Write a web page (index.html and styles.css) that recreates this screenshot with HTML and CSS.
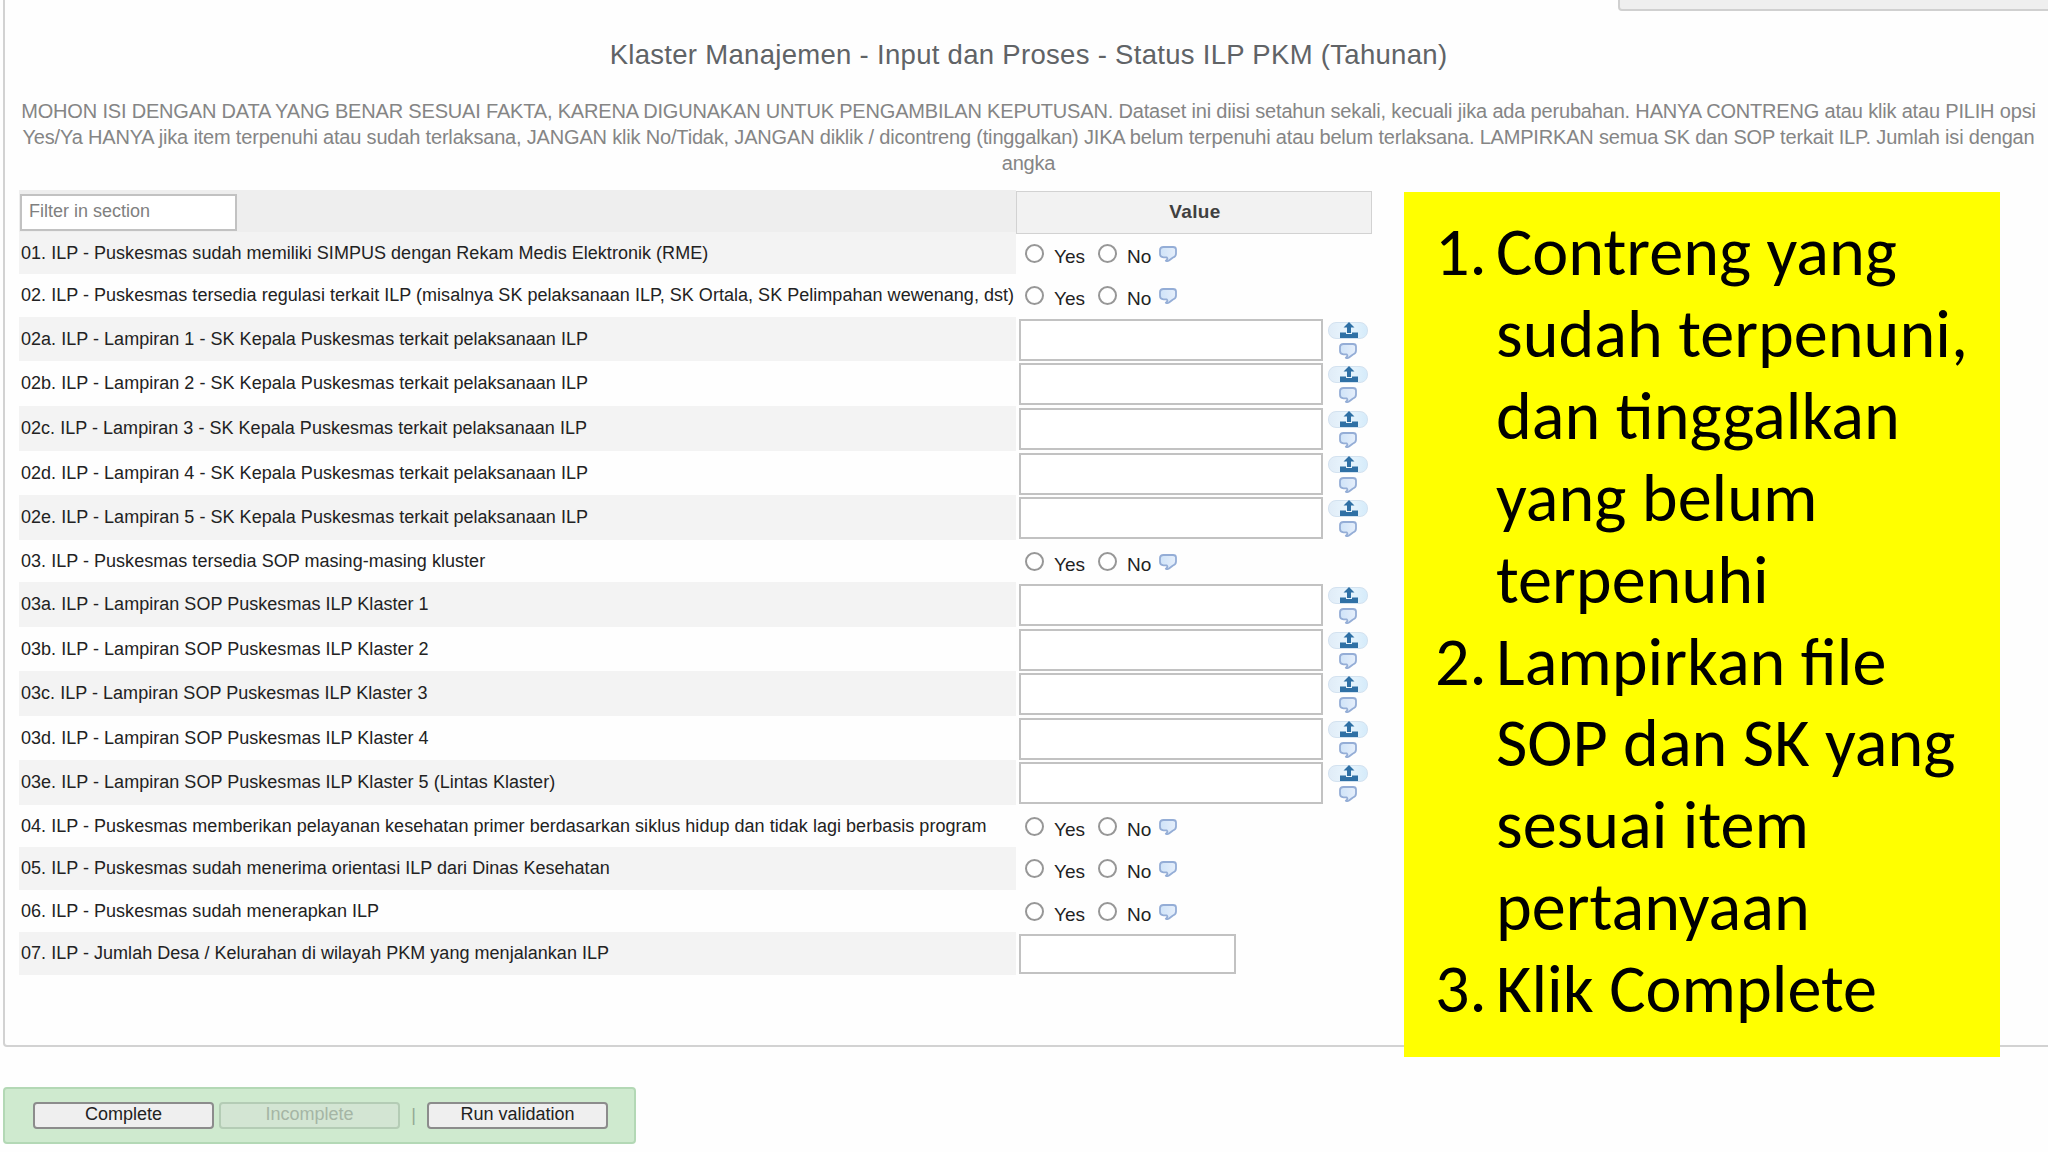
FILE: index.html
```html
<!DOCTYPE html>
<html lang="id">

<head>
  <meta charset="UTF-8">
  <meta name="viewport" content="width=device-width, initial-scale=1.0">
  <title>Data Entry</title>
  <link rel="stylesheet" href="styles.css">
</head>

<body>

  <svg class="sprite">
    <defs>
      <linearGradient id="bubbleFill" x1="0" y1="0" x2="1" y2="0">
        <stop offset="0" stop-color="#cfe3f8" />
        <stop offset="1" stop-color="#e6effb" />
      </linearGradient>
    </defs>
    <symbol id="comment" viewBox="0 0 18 16">
      <path d="M4.500 1H14Q17 1 17 3.500V7.500Q17 10.500 14 11.500L10 14.500Q8 15.600 6.800 14.800L8.500 13L7.800 11.300H4.500Q1 11 1 8V4Q1 1 4.500 1Z" fill="url(#bubbleFill)" stroke="#94add6" stroke-width="1.800" stroke-linejoin="round" />
    </symbol>
    <symbol id="upload" viewBox="0 0 18 16">
      <path d="M9 0L14.500 5.500H11V11H7V5.500H3.500Z" fill="#2f70a5" />
      <path d="M0 10.500H6V12H12V10.500H18V16H0Z" fill="#2f70a5" />
    </symbol>
  </svg>

  <div class="top-tab"></div>

  <div id="contentDiv">
    <h1 class="title">Klaster Manajemen - Input dan Proses - Status ILP PKM (Tahunan)</h1>
    <p class="description">
      MOHON ISI DENGAN DATA YANG BENAR SESUAI FAKTA, KARENA DIGUNAKAN UNTUK PENGAMBILAN KEPUTUSAN. Dataset ini diisi setahun sekali, kecuali jika ada perubahan. HANYA CONTRENG atau klik atau PILIH opsi<br>
      Yes/Ya HANYA jika item terpenuhi atau sudah terlaksana, JANGAN klik No/Tidak, JANGAN diklik / dicontreng (tinggalkan) JIKA belum terpenuhi atau belum terlaksana. LAMPIRKAN semua SK dan SOP terkait ILP. Jumlah isi dengan<br>
      angka
    </p>

    <div class="form">
      <div class="head">
        <div class="filter-cell"><input type="text" class="filter" placeholder="Filter in section"></div>
        <div class="value-head">Value</div>
      </div>

      <div class="row">
        <div class="label">01. ILP - Puskesmas sudah memiliki SIMPUS dengan Rekam Medis Elektronik (RME)</div>
        <div class="choice"><i class="radio"></i><span>Yes</span><i class="radio"></i><span>No</span><svg class="icon"><use href="#comment" /></svg></div>
      </div>
      <div class="row">
        <div class="label">02. ILP - Puskesmas tersedia regulasi terkait ILP (misalnya SK pelaksanaan ILP, SK Ortala, SK Pelimpahan wewenang, dst)</div>
        <div class="choice"><i class="radio"></i><span>Yes</span><i class="radio"></i><span>No</span><svg class="icon"><use href="#comment" /></svg></div>
      </div>
      <div class="row file">
        <div class="label">02a. ILP - Lampiran 1 - SK Kepala Puskesmas terkait pelaksanaan ILP</div>
        <div class="entry"><input type="text"><div class="tools"><span class="upload"><svg class="icon"><use href="#upload" /></svg></span><svg class="icon"><use href="#comment" /></svg></div></div>
      </div>
      <div class="row file">
        <div class="label">02b. ILP - Lampiran 2 - SK Kepala Puskesmas terkait pelaksanaan ILP</div>
        <div class="entry"><input type="text"><div class="tools"><span class="upload"><svg class="icon"><use href="#upload" /></svg></span><svg class="icon"><use href="#comment" /></svg></div></div>
      </div>
      <div class="row file">
        <div class="label">02c. ILP - Lampiran 3 - SK Kepala Puskesmas terkait pelaksanaan ILP</div>
        <div class="entry"><input type="text"><div class="tools"><span class="upload"><svg class="icon"><use href="#upload" /></svg></span><svg class="icon"><use href="#comment" /></svg></div></div>
      </div>
      <div class="row file">
        <div class="label">02d. ILP - Lampiran 4 - SK Kepala Puskesmas terkait pelaksanaan ILP</div>
        <div class="entry"><input type="text"><div class="tools"><span class="upload"><svg class="icon"><use href="#upload" /></svg></span><svg class="icon"><use href="#comment" /></svg></div></div>
      </div>
      <div class="row file">
        <div class="label">02e. ILP - Lampiran 5 - SK Kepala Puskesmas terkait pelaksanaan ILP</div>
        <div class="entry"><input type="text"><div class="tools"><span class="upload"><svg class="icon"><use href="#upload" /></svg></span><svg class="icon"><use href="#comment" /></svg></div></div>
      </div>
      <div class="row">
        <div class="label">03. ILP - Puskesmas tersedia SOP masing-masing kluster</div>
        <div class="choice"><i class="radio"></i><span>Yes</span><i class="radio"></i><span>No</span><svg class="icon"><use href="#comment" /></svg></div>
      </div>
      <div class="row file">
        <div class="label">03a. ILP - Lampiran SOP Puskesmas ILP Klaster 1</div>
        <div class="entry"><input type="text"><div class="tools"><span class="upload"><svg class="icon"><use href="#upload" /></svg></span><svg class="icon"><use href="#comment" /></svg></div></div>
      </div>
      <div class="row file">
        <div class="label">03b. ILP - Lampiran SOP Puskesmas ILP Klaster 2</div>
        <div class="entry"><input type="text"><div class="tools"><span class="upload"><svg class="icon"><use href="#upload" /></svg></span><svg class="icon"><use href="#comment" /></svg></div></div>
      </div>
      <div class="row file">
        <div class="label">03c. ILP - Lampiran SOP Puskesmas ILP Klaster 3</div>
        <div class="entry"><input type="text"><div class="tools"><span class="upload"><svg class="icon"><use href="#upload" /></svg></span><svg class="icon"><use href="#comment" /></svg></div></div>
      </div>
      <div class="row file">
        <div class="label">03d. ILP - Lampiran SOP Puskesmas ILP Klaster 4</div>
        <div class="entry"><input type="text"><div class="tools"><span class="upload"><svg class="icon"><use href="#upload" /></svg></span><svg class="icon"><use href="#comment" /></svg></div></div>
      </div>
      <div class="row file">
        <div class="label">03e. ILP - Lampiran SOP Puskesmas ILP Klaster 5 (Lintas Klaster)</div>
        <div class="entry"><input type="text"><div class="tools"><span class="upload"><svg class="icon"><use href="#upload" /></svg></span><svg class="icon"><use href="#comment" /></svg></div></div>
      </div>
      <div class="row">
        <div class="label">04. ILP - Puskesmas memberikan pelayanan kesehatan primer berdasarkan siklus hidup dan tidak lagi berbasis program</div>
        <div class="choice"><i class="radio"></i><span>Yes</span><i class="radio"></i><span>No</span><svg class="icon"><use href="#comment" /></svg></div>
      </div>
      <div class="row">
        <div class="label">05. ILP - Puskesmas sudah menerima orientasi ILP dari Dinas Kesehatan</div>
        <div class="choice"><i class="radio"></i><span>Yes</span><i class="radio"></i><span>No</span><svg class="icon"><use href="#comment" /></svg></div>
      </div>
      <div class="row">
        <div class="label">06. ILP - Puskesmas sudah menerapkan ILP</div>
        <div class="choice"><i class="radio"></i><span>Yes</span><i class="radio"></i><span>No</span><svg class="icon"><use href="#comment" /></svg></div>
      </div>
      <div class="row">
        <div class="label">07. ILP - Jumlah Desa / Kelurahan di wilayah PKM yang menjalankan ILP</div>
        <div class="entry number"><input type="text"></div>
      </div>
    </div>
  </div>

  <div id="completenessDiv">
    <button>Complete</button>
    <button disabled>Incomplete</button>
    <span class="separator">|</span>
    <button>Run validation</button>
  </div>

  <!-- instructions, over the form -->
  <ol class="note">
    <li>Contreng yang<br>sudah terpenuni,<br>dan tinggalkan<br>yang belum<br>terpenuhi</li>
    <li>Lampirkan file<br>SOP dan SK yang<br>sesuai item<br>pertanyaan</li>
    <li>Klik Complete</li>
  </ol>

</body>

</html>
```
FILE: styles.css
```css
* {
  box-sizing: border-box;
}

body {
  position: relative;
  margin: 0;
  height: 1152px;
  overflow: hidden;
  background-color: #fefefe;
  color: #222;
  font-family: "Liberation Sans", Arial, sans-serif;
  font-size: 18px;
}

.sprite {
  position: absolute;
  width: 0;
  height: 0;
}

.top-tab {
  position: absolute;
  top: -10px;
  right: -10px;
  width: 440px;
  height: 21px;
  background-color: #efefef;
  border: 2px solid #d0d0d0;
  border-radius: 4px;
}

#contentDiv {
  height: 1047px;
  margin-left: 3px;
  margin-right: -10px;
  padding: 38px 10px 0 16px;
  border: 2px solid #d2d2d2;
  border-top: 0;
  border-radius: 0 0 4px 4px;
}

.title {
  width: 2015px;
  margin: 0 0 27px;
  font-size: 27.500px;
  font-weight: normal;
  line-height: 34px;
  letter-spacing: 0.300px;
  text-align: center;
  color: #606366;
}

.description {
  width: 2015px;
  height: 81px;
  margin: 0;
  font-size: 20px;
  line-height: 25.800px;
  letter-spacing: -0.180px;
  text-align: center;
  white-space: nowrap;
  color: #858585;
}

.form {
  width: 1353px;
  margin-top: 10px;
  margin-left: -2px;
}

.head {
  display: flex;
  height: 42px;
}

.filter-cell {
  width: 997px;
  padding: 4px 1px;
  background-color: #eee;
}

input {
  display: block;
  border: 2px solid #c2c2c2;
  background-color: #fff;
  font: inherit;
}

.filter {
  width: 217px;
  height: 37px;
  padding: 0 7px 3px;
}

.filter::placeholder {
  color: #808080;
}

.value-head {
  width: 356px;
  height: 43px;
  margin-top: 1px;
  padding-left: 2px;
  border: 1px solid #d2d2d2;
  background-color: #f2f2f2;
  font-size: 19px;
  font-weight: bold;
  line-height: 39px;
  letter-spacing: 0.400px;
  text-align: center;
  color: #404040;
}

.row {
  display: flex;
  height: 42.450px;
}

.file {
  height: 44.550px;
}

.label {
  width: 997px;
  padding: 10px 0 0 2px;
  line-height: 22px;
  letter-spacing: 0.030px;
  white-space: nowrap;
}

.file .label {
  padding-top: 11px;
}

.row:nth-child(even) .label {
  background-color: #f3f3f3;
}

.choice {
  display: flex;
  align-items: flex-start;
  padding: 12px 0 0 9px;
  font-size: 19px;
  line-height: 22px;
}

.choice span {
  width: 44px;
  padding: 2px 0 0;
}

.choice span:nth-of-type(2) {
  width: 32px;
}

.radio {
  width: 19px;
  height: 19px;
  margin-right: 10px;
  border: 2px solid #979797;
  border-radius: 50%;
  background-color: #fff;
}

.icon {
  display: block;
  width: 18px;
  height: 16px;
}

.choice .icon {
  margin-top: 2px;
}

.entry {
  display: flex;
  padding: 2px 0 0 3px;
}

.entry input {
  width: 304px;
  height: 42px;
}

.entry.number input {
  width: 217px;
  height: 40px;
}

.tools {
  display: flex;
  flex-direction: column;
  align-items: center;
  gap: 4px;
  margin-left: 5px;
  padding-top: 3px;
}

.upload {
  width: 40px;
  height: 17px;
  padding-left: 11px;
  border: 1px solid #d3e2f0;
  border-radius: 8px;
  background: linear-gradient(to right, #e0ecf7, #e9f5fd 50%, #d5ebfa);
}

.upload .icon {
  margin-top: -1px;
}

#completenessDiv {
  display: flex;
  align-items: flex-start;
  width: 633px;
  height: 57px;
  margin: 40px 0 0 3px;
  padding: 13px 0 0 28px;
  border: 2px solid #b3d8b5;
  border-radius: 4px;
  background-color: #cfeacf;
}

button {
  width: 181px;
  height: 27px;
  padding: 0 0 2px;
  border: 2px solid #8c8c8c;
  border-radius: 4px;
  background-color: #efefef;
  font: inherit;
  line-height: 21px;
  color: #222;
}

button:disabled {
  margin-left: 5px;
  border-color: #b4ccb5;
  background-color: #d3e5d3;
  color: #a5b5a5;
}

.separator {
  width: 27px;
  text-align: center;
  line-height: 27px;
  color: #94a894;
}

.note {
  position: absolute;
  top: 192px;
  left: 1404px;
  width: 596px;
  height: 865px;
  margin: 0;
  padding: 19px 0 0 32px;
  list-style: none;
  counter-reset: step;
  background-color: #ff0;
  color: #000;
  font-family: Carlito, Calibri, Lato, sans-serif;
  font-size: 68.200px;
  line-height: 81.900px;
}

.note li {
  padding-left: 60px;
  counter-increment: step;
  white-space: nowrap;
}

.note li::before {
  content: counter(step) ".";
  float: left;
  margin-left: -61px;
}
```
